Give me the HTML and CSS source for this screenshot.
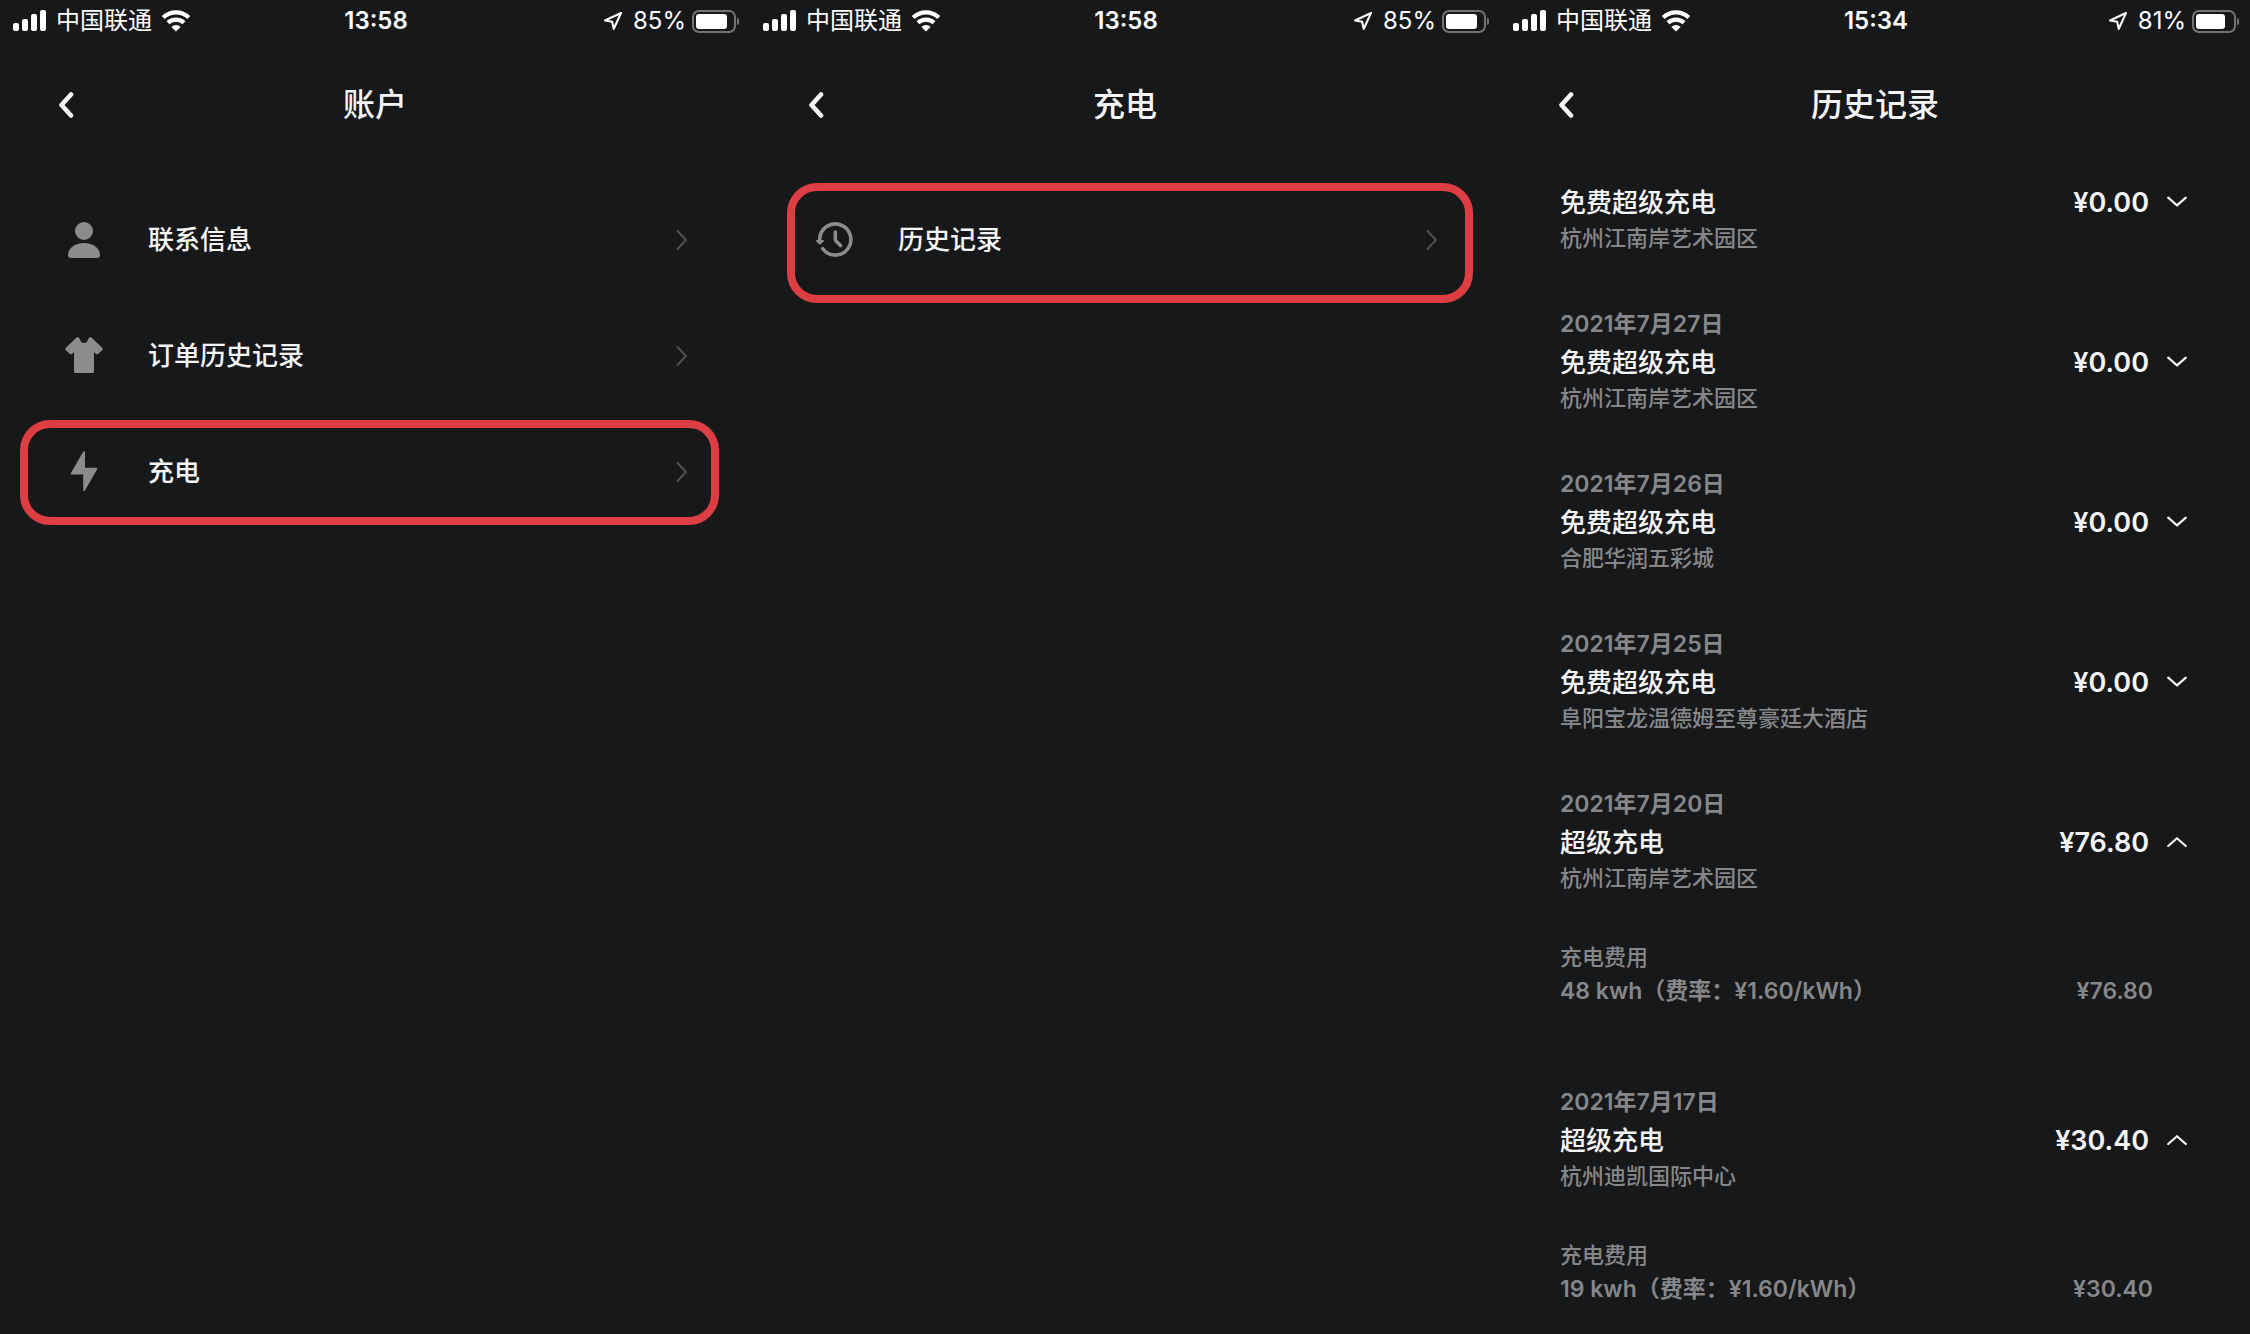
FILE: index.html
```html
<!DOCTYPE html>
<html lang="zh-CN">

<head>
    <meta charset="UTF-8">
    <meta name="viewport" content="width=device-width, initial-scale=1.0">
    <title>充电历史记录</title>
    <link rel="stylesheet" href="styles.css">
</head>

<body>
    <!-- shared icons -->
    <svg class="sprite" aria-hidden="true">
        <symbol id="signal" viewBox="0 0 34 22">
            <rect x="0" y="13" width="6" height="8" rx="2" />
            <rect x="9" y="9" width="6" height="12" rx="2" />
            <rect x="18" y="4" width="6" height="17" rx="2" />
            <rect x="27" y="0" width="6" height="21" rx="2" />
        </symbol>
        <symbol id="wifi" viewBox="0 0 30 22">
            <path d="M2.2 7.6a18.5 18.5 0 0 1 25.6 0M7 12.8a11.6 11.6 0 0 1 16 0" fill="none" stroke="currentColor" stroke-width="4.2" />
            <path d="M15 21.6l-4.6-4.7a6.6 6.6 0 0 1 9.2 0z" />
        </symbol>
        <symbol id="location" viewBox="0 0 20 20">
            <path d="M18 2L2 9.5l7.2 1.3L10.700 18z" fill="none" stroke="currentColor" stroke-width="2" stroke-linejoin="round" />
        </symbol>
        <symbol id="back" viewBox="0 0 16 28">
            <path d="M13 3.500L3.500 14l9.500 10.500" fill="none" stroke="currentColor" stroke-width="4.600" stroke-linecap="round" stroke-linejoin="round" />
        </symbol>
        <symbol id="next" viewBox="0 0 12 22">
            <path d="M1.500 2l8.500 9-8.500 9" fill="none" stroke="currentColor" stroke-width="2" stroke-linecap="round" />
        </symbol>
        <symbol id="down" viewBox="0 0 20 12">
            <path d="M1.200 1.700l8.800 7.600 8.800-7.600" fill="none" stroke="currentColor" stroke-width="2.200" stroke-linecap="round" stroke-linejoin="round" />
        </symbol>
        <symbol id="up" viewBox="0 0 20 12">
            <path d="M1.200 10l8.800-7.800 8.800 7.800" fill="none" stroke="currentColor" stroke-width="2.200" stroke-linecap="round" stroke-linejoin="round" />
        </symbol>
    </svg>

    <main class="screens">
        <section class="screen">
            <div class="status">
                <div class="carrier">
                    <svg class="signal"><use href="#signal" /></svg>
                    <span>中国联通</span>
                    <svg class="wifi"><use href="#wifi" /></svg>
                </div>
                <time class="clock">13:58</time>
                <div class="power">
                    <svg class="location"><use href="#location" /></svg>
                    <span>85%</span>
                    <span class="battery"><span class="level" style="width: 85%"></span></span>
                </div>
            </div>
            <header class="nav">
                <button type="button" class="back" aria-label="返回"><svg><use href="#back" /></svg></button>
                <h1>账户</h1>
            </header>
            <ul class="menu">
                <li>
                    <a href="#contact">
                        <svg class="icon" viewBox="0 0 40 40">
                            <circle cx="20" cy="11" r="9" />
                            <path d="M20 23c9 0 16 5 16 12 0 2-1 3-3 3H7c-2 0-3-1-3-3 0-7 7-12 16-12z" />
                        </svg>
                        <span>联系信息</span>
                        <svg class="next"><use href="#next" /></svg>
                    </a>
                </li>
                <li>
                    <a href="#orders">
                        <svg class="icon" viewBox="0 0 40 40">
                            <path d="M12.500 1.500Q14 .8 15.300 2L16.500 5Q17.500 7 20 7t3.500-2L24.700 2Q26 .8 27.500 1.500L38.300 12Q39.200 13 38.300 14L34 18Q32.800 18.800 31.700 17.700L30 16V35.500Q30 37 28.500 37h-17Q10 37 10 35.500V16L8.300 17.700Q7.200 18.800 6 18L1.700 14Q.8 13 1.700 12z" />
                        </svg>
                        <span>订单历史记录</span>
                        <svg class="next"><use href="#next" /></svg>
                    </a>
                </li>
                <li class="marked">
                    <a href="#charging">
                        <svg class="icon" viewBox="0 0 40 40">
                            <path d="M19 0Q20.800-1.500 21-.2V15.700H32.500Q34 16 33 17.400L21 38.500Q19.500 40 19.200 38.500V22.600H7.500Q6 22.400 7 21z" />
                        </svg>
                        <span>充电</span>
                        <svg class="next"><use href="#next" /></svg>
                    </a>
                </li>
            </ul>
        </section>

        <section class="screen">
            <div class="status">
                <div class="carrier">
                    <svg class="signal"><use href="#signal" /></svg>
                    <span>中国联通</span>
                    <svg class="wifi"><use href="#wifi" /></svg>
                </div>
                <time class="clock">13:58</time>
                <div class="power">
                    <svg class="location"><use href="#location" /></svg>
                    <span>85%</span>
                    <span class="battery"><span class="level" style="width: 85%"></span></span>
                </div>
            </div>
            <header class="nav">
                <button type="button" class="back" aria-label="返回"><svg><use href="#back" /></svg></button>
                <h1>充电</h1>
            </header>
            <ul class="menu">
                <li class="marked tall">
                    <a href="#history">
                        <svg class="icon" viewBox="0 0 40 40">
                            <path d="M8.700 28.700A15.600 15.600 0 1 0 5.700 19.300M21.300 12v7.300q0 1 .7 1.700l4.500 4.500" fill="none" stroke="currentColor" stroke-width="3.600" stroke-linecap="round" stroke-linejoin="round" />
                            <path d="M2.500 20h7q1 .3.300 1.200l-3.200 3q-.8.600-1.500 0l-2.900-3q-.7-.9.300-1.200z" />
                        </svg>
                        <span>历史记录</span>
                        <svg class="next"><use href="#next" /></svg>
                    </a>
                </li>
            </ul>
        </section>

        <section class="screen">
            <div class="status">
                <div class="carrier">
                    <svg class="signal"><use href="#signal" /></svg>
                    <span>中国联通</span>
                    <svg class="wifi"><use href="#wifi" /></svg>
                </div>
                <time class="clock">15:34</time>
                <div class="power">
                    <svg class="location"><use href="#location" /></svg>
                    <span>81%</span>
                    <span class="battery"><span class="level" style="width: 81%"></span></span>
                </div>
            </div>
            <header class="nav">
                <button type="button" class="back" aria-label="返回"><svg><use href="#back" /></svg></button>
                <h1>历史记录</h1>
            </header>
            <div class="history">
                <article class="record">
                    <button type="button" class="summary" aria-expanded="false">
                        <span class="name">免费超级充电</span>
                        <span class="price">¥0.00</span>
                        <svg class="toggle"><use href="#down" /></svg>
                    </button>
                    <p class="place">杭州江南岸艺术园区</p>
                </article>
                <article class="record">
                    <time class="date">2021年7月27日</time>
                    <button type="button" class="summary" aria-expanded="false">
                        <span class="name">免费超级充电</span>
                        <span class="price">¥0.00</span>
                        <svg class="toggle"><use href="#down" /></svg>
                    </button>
                    <p class="place">杭州江南岸艺术园区</p>
                </article>
                <article class="record">
                    <time class="date">2021年7月26日</time>
                    <button type="button" class="summary" aria-expanded="false">
                        <span class="name">免费超级充电</span>
                        <span class="price">¥0.00</span>
                        <svg class="toggle"><use href="#down" /></svg>
                    </button>
                    <p class="place">合肥华润五彩城</p>
                </article>
                <article class="record">
                    <time class="date">2021年7月25日</time>
                    <button type="button" class="summary" aria-expanded="false">
                        <span class="name">免费超级充电</span>
                        <span class="price">¥0.00</span>
                        <svg class="toggle"><use href="#down" /></svg>
                    </button>
                    <p class="place">阜阳宝龙温德姆至尊豪廷大酒店</p>
                </article>
                <article class="record">
                    <time class="date">2021年7月20日</time>
                    <button type="button" class="summary" aria-expanded="true">
                        <span class="name">超级充电</span>
                        <span class="price">¥76.80</span>
                        <svg class="toggle"><use href="#up" /></svg>
                    </button>
                    <p class="place">杭州江南岸艺术园区</p>
                    <div class="fee">
                        <p>充电费用</p>
                        <p class="rate"><span>48 kwh（费率：¥1.60/kWh）</span><span>¥76.80</span></p>
                    </div>
                </article>
                <article class="record">
                    <time class="date">2021年7月17日</time>
                    <button type="button" class="summary" aria-expanded="true">
                        <span class="name">超级充电</span>
                        <span class="price">¥30.40</span>
                        <svg class="toggle"><use href="#up" /></svg>
                    </button>
                    <p class="place">杭州迪凯国际中心</p>
                    <div class="fee">
                        <p>充电费用</p>
                        <p class="rate"><span>19 kwh（费率：¥1.60/kWh）</span><span>¥30.40</span></p>
                    </div>
                </article>
            </div>
        </section>
    </main>
</body>

</html>
```
FILE: styles.css
```css
* {
    margin: 0;
    padding: 0;
    box-sizing: border-box;
}

body {
    background-color: #17181a;
    color: #f5f5f5;
    font-family: Inter, "Noto Sans CJK SC", sans-serif;
    font-size: 26px;
    font-weight: 500;
}

svg {
    display: block;
    flex: none;
    fill: currentColor;
    overflow: visible;
}

.sprite {
    position: absolute;
    width: 0;
    height: 0;
}

button {
    border: none;
    background: none;
    color: inherit;
    font: inherit;
    cursor: pointer;
}

.screens {
    display: grid;
    grid-template-columns: repeat(3, 1fr);
    min-height: 100vh;
}

/* status bar */
.status {
    display: grid;
    grid-template-columns: 1fr auto 1fr;
    align-items: center;
    height: 42px;
    padding: 0 11px 0 13px;
    color: #fff;
    font-size: 24px;
    font-weight: 400;
    line-height: 42px;
}

.carrier,
.power {
    display: flex;
    align-items: center;
}

.carrier {
    gap: 9px;
}

.power {
    justify-content: flex-end;
    gap: 6px;
}

.clock {
    font-weight: 600;
}

.signal {
    width: 34px;
    height: 22px;
}

.wifi {
    width: 30px;
    height: 22px;
}

.location {
    width: 20px;
    height: 20px;
    margin-right: 4px;
}

.battery {
    position: relative;
    width: 44px;
    height: 23px;
    margin-right: 3px;
    padding: 2px;
    border: 2px solid #737475;
    border-radius: 7px;
}

.battery::after {
    content: "";
    position: absolute;
    top: 6px;
    right: -5px;
    width: 2px;
    height: 7px;
    border-radius: 0 2px 2px 0;
    background-color: #737475;
}

.level {
    display: block;
    height: 15px;
    border-radius: 3px;
    background-color: #fff;
}

/* title bar */
.nav {
    display: grid;
    grid-template-columns: 1fr auto 1fr;
    align-items: center;
    height: 126px;
    padding: 0 58px;
}

.nav h1 {
    font-size: 32px;
    font-weight: 500;
    line-height: 40px;
}

.back {
    justify-self: start;
}

.back svg {
    width: 16px;
    height: 28px;
}

/* menu list */
.menu {
    padding-top: 14px;
    line-height: 38px;
    list-style: none;
}

.menu li {
    position: relative;
}

.menu a {
    display: flex;
    align-items: center;
    height: 116px;
    padding: 0 62px 0 64px;
    color: inherit;
    text-decoration: none;
}

.menu span {
    flex: 1;
    margin-left: 44px;
}

.icon {
    width: 40px;
    height: 40px;
    color: #8b8c8e;
}

.next {
    width: 12px;
    height: 22px;
    color: #505153;
}

.marked::after {
    content: "";
    position: absolute;
    inset: 6px 31px 5px 20px;
    border: 8px solid #dd3e43;
    border-radius: 30px;
    pointer-events: none;
}

.tall::after {
    inset: 1px 27px -5px 37px;
}

/* charging history */
.history {
    display: flex;
    flex-direction: column;
    gap: 50px;
    padding: 16px 63px 0 60px;
}

.date,
.place,
.fee {
    color: #868789;
    font-size: 22px;
}

.date {
    display: block;
    font-size: 23px;
    font-weight: 600;
    line-height: 40px;
}

.summary {
    display: flex;
    align-items: center;
    width: 100%;
    line-height: 38px;
    text-align: left;
}

.name {
    flex: 1;
}

.price {
    font-size: 27px;
    font-weight: 600;
}

.toggle {
    width: 20px;
    height: 12px;
    margin: 0 0 3px 18px;
}

.place {
    line-height: 32px;
}

.fee {
    margin-top: 46px;
    padding: 0 34px 24px 0;
    line-height: 34px;
}

.rate {
    display: flex;
    justify-content: space-between;
    font-size: 23px;
    font-weight: 600;
}
```
